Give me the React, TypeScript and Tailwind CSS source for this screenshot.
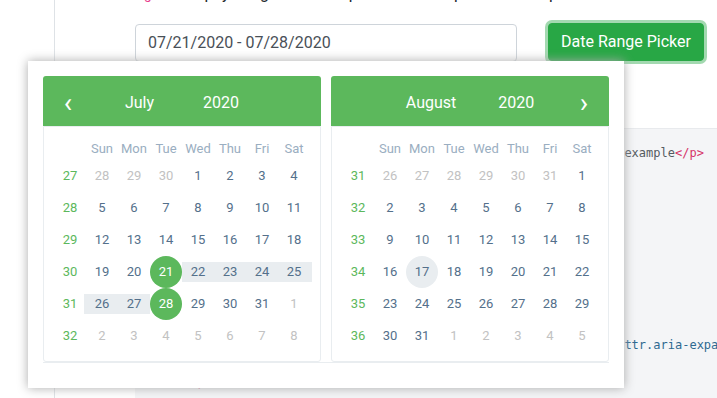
import React from "react";

type Cell = { d: number; m?: boolean; s?: boolean; t?: boolean; band?: "r" | "a" | "b" };

function parse(row: string): Cell[] {
  return row.split(" ").map((tok) => {
    const d = parseInt(tok, 10);
    const f = tok.replace(/[0-9]/g, "");
    const c: Cell = { d };
    if (f === "m") c.m = true;
    if (f === "s") c.s = true;
    if (f === "t") c.t = true;
    if (f === "r" || f === "a" || f === "b") c.band = f;
    return c;
  });
}

const JULY: [number, string][] = [
  [27, "28m 29m 30m 1 2 3 4"],
  [28, "5 6 7 8 9 10 11"],
  [29, "12 13 14 15 16 17 18"],
  [30, "19 20 21s 22a 23r 24r 25r"],
  [31, "26r 27b 28s 29 30 31 1m"],
  [32, "2m 3m 4m 5m 6m 7m 8m"],
];

const AUG: [number, string][] = [
  [31, "26m 27m 28m 29m 30m 31m 1"],
  [32, "2 3 4 5 6 7 8"],
  [33, "9 10 11 12 13 14 15"],
  [34, "16 17t 18 19 20 21 22"],
  [35, "23 24 25 26 27 28 29"],
  [36, "30 31 1m 2m 3m 4m 5m"],
];

const DAYS = ["Sun", "Mon", "Tue", "Wed", "Thu", "Fri", "Sat"];

function DayCell({ c }: { c: Cell }) {
  let bandCls = "";
  if (c.band === "r") bandCls = "absolute top-[6px] bottom-[6px] left-[-2px] right-[-2px] bg-[#e9edf0]";
  if (c.band === "a") bandCls = "absolute top-[6px] bottom-[6px] left-0 right-[-2px] bg-[#e9edf0]";
  if (c.band === "b") bandCls = "absolute top-[6px] bottom-[6px] left-[-2px] right-0 bg-[#e9edf0]";
  let spanCls = "text-[#54708b]";
  if (c.m) spanCls = "text-[#c2c2c2]";
  if (c.s) spanCls = "bg-[#5cb85c] text-white";
  if (c.t) spanCls = "bg-[#e9edf0] text-[#54708b]";
  return (
    <div className="relative flex h-[32px] items-center justify-center">
      {c.band && <div className={bandCls} />}
      <span className={`relative flex h-[32px] w-[32px] items-center justify-center rounded-full text-[13px] ${spanCls}`}>
        {c.d}
      </span>
    </div>
  );
}

function Month({ name, weeks, prev, next }: { name: string; weeks: [number, string][]; prev: boolean; next: boolean }) {
  return (
    <div className="w-[278px]">
      <div className="flex h-[50px] items-center justify-between rounded-t-[3px] bg-[#5cb85c] px-[10px] pt-[4px] text-white">
        <span className={`flex h-[30px] w-[30px] items-center justify-center text-[28px] leading-none ${prev ? "" : "invisible"}`}>
          ‹
        </span>
        <span className="h-[30px] px-[7px] text-[16px] leading-[30px]">{name}</span>
        <span className="h-[30px] px-[7px] text-[16px] leading-[30px]">2020</span>
        <span className={`flex h-[30px] w-[30px] items-center justify-center text-[28px] leading-none ${next ? "" : "invisible"}`}>
          ›
        </span>
      </div>
      <div className="rounded-b-[3px] border border-[#e9edf0] px-[10px] pb-[9px] pt-[11px]">
        <div className="grid grid-cols-8">
          <div className="h-[22px]" />
          {DAYS.map((d) => (
            <div key={d} className="flex h-[22px] items-center justify-center text-[13px] text-[#9aaec1]">
              {d}
            </div>
          ))}
          {weeks.map(([w, row]) => (
            <React.Fragment key={w}>
              <div className="flex h-[32px] items-center justify-center text-[13px] text-[#5cb85c]">{w}</div>
              {parse(row).map((c, i) => (
                <DayCell key={i} c={c} />
              ))}
            </React.Fragment>
          ))}
        </div>
      </div>
    </div>
  );
}

const codeLines: React.ReactNode[] = [
  <>
    <span className="text-[#555b61]">{"<p>Pick a start and an end date in the calendars below, for an ".padEnd(64)}</span>
    <span className="text-[#555b61]">example</span>
    <span className="text-[#d63369]">{"</p>"}</span>
  </>,
  <span className="text-[#555b61]">{'<div class="row">'}</span>,
  <span className="text-[#555b61]">{'  <div class="col-xs-12 col-12 col-md-6 form-group">'}</span>,
  <span className="text-[#555b61]">{'    <input type="text" placeholder="Daterangepicker"'}</span>,
  <span className="text-[#555b61]">{'           class="form-control"'}</span>,
  <span className="text-[#555b61]">{'           #dp="bsDaterangepicker"'}</span>,
  <span className="text-[#555b61]">{'           bsDaterangepicker [(ngModel)]="bsRangeValue">'}</span>,
  <span className="text-[#555b61]">{'  </div>'}</span>,
  <span className="text-[#555b61]">{'  <div class="col-xs-12 col-12 col-md-3 form-group">'}</span>,
  <span className="text-[#555b61]">{'    <button class="btn btn-success"'}</span>,
  <>
    <span className="text-[#555b61]">{'(click)="dp.toggle()" type="button" ['.padStart(63)}</span>
    <span className="text-[#2f6a91]">attr.aria-expanded</span>
    <span className="text-[#555b61]">{']="dp.isOpen">'}</span>
  </>,
  <span className="text-[#555b61]">{'      Date Range Picker</button>'}</span>,
  <span className="text-[#d63369]">{'    </div>'}</span>,
];

export default function App() {
  return (
    <div className="relative flex h-[398px] w-[717px] overflow-hidden bg-white font-[Roboto,sans-serif]">
      <div className="w-[55px] shrink-0 border-r border-[#dee2e6]" />
      <div className="flex min-w-0 flex-1 flex-col">
        <div className="-mt-[18px] whitespace-nowrap pl-[80px] text-[16px] leading-[24px] text-[#212529]">
          <span className="font-['Liberation_Mono',monospace] text-[14px] text-[#e83e8c]">ng</span>
          <span> and to pay the great notice put to the side picker then a panel</span>
        </div>
        <div className="mt-[17px] flex items-start pl-[80px]">
          <div className="flex h-[38px] w-[382px] items-center rounded-[4px] border border-[#ced4da] px-[12px] text-[16px] text-[#495057]">
            07/21/2020 - 07/28/2020
          </div>
          <button className="-mt-px ml-[31px] h-[38px] rounded-[4px] border border-[#28a745] bg-[#28a745] px-[12px] text-[16px] text-white shadow-[0_0_0_3px_rgba(72,180,97,0.5)]">
            Date Range Picker
          </button>
        </div>
        <div className="ml-[80px] mt-[66px] flex-1 border-t border-[#e8eaed] bg-[#f4f5f7] pl-[27px] pt-[15px] font-['DejaVu_Sans_Mono',monospace] text-[12px] leading-[19.2px]">
          {codeLines.map((l, i) => (
            <div key={i} className="whitespace-pre">
              {l}
            </div>
          ))}
        </div>
      </div>

      <div className="absolute left-[28px] top-[61px] bg-white p-[15px] shadow-[0_0_10px_0_#aaa]">
        <div className="flex gap-[10px]">
          <Month name="July" weeks={JULY} prev={true} next={false} />
          <Month name="August" weeks={AUG} prev={false} next={true} />
        </div>
        <div className="border-t border-[#e9edf0] pt-[10px]" />
      </div>
    </div>
  );
}
